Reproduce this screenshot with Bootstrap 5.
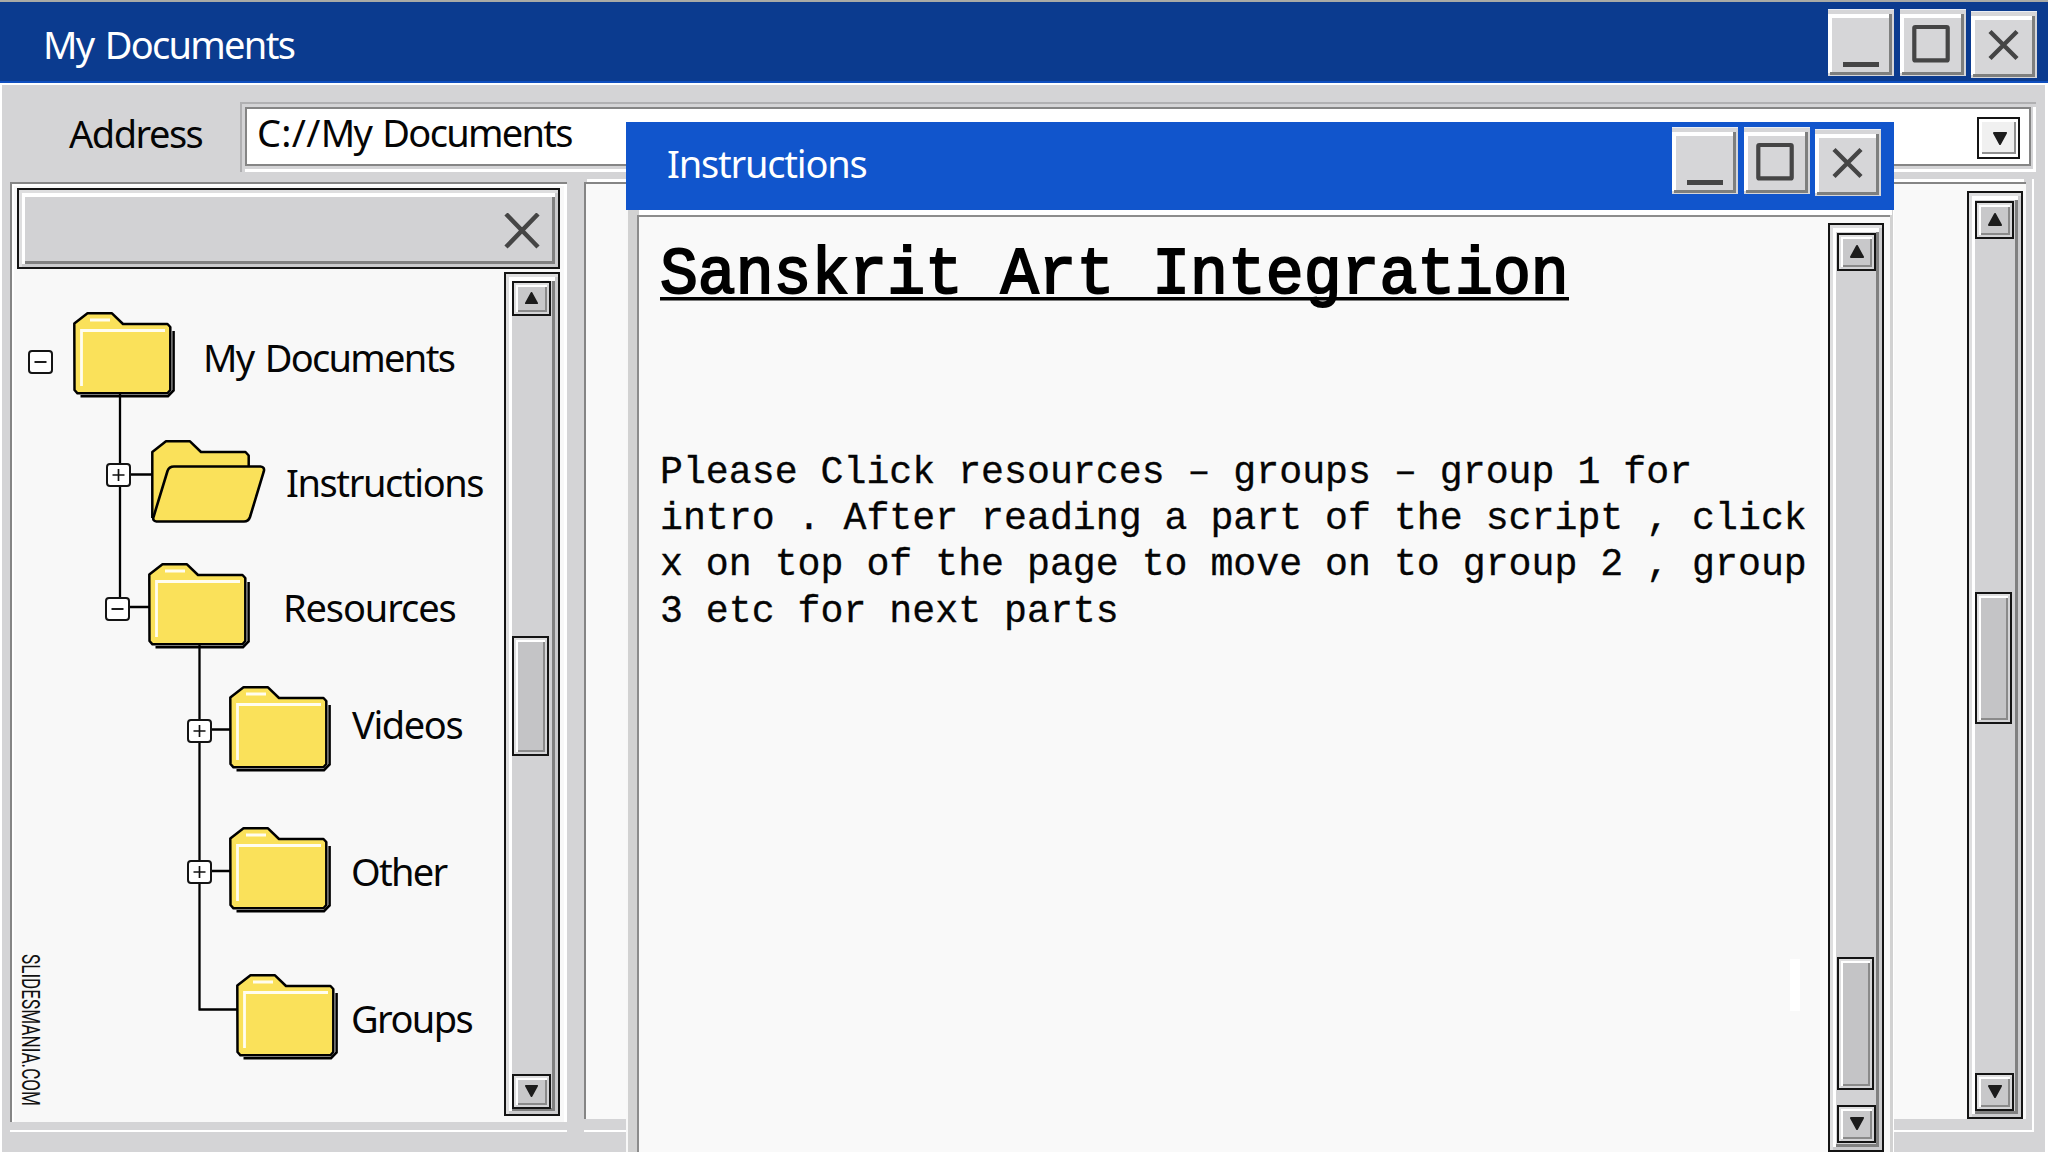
<!DOCTYPE html>
<html lang="en">
<head>
<meta charset="utf-8">
<meta name="viewport" content="width=device-width, initial-scale=1">
<title>My Documents</title>
<link href="https://cdn.jsdelivr.net/npm/bootstrap@5.3.0/dist/css/bootstrap.min.css" rel="stylesheet">
<style>
body{width:2048px;height:1152px;overflow:hidden;background:#d4d4d6;color:#050505;font-family:"Noto Sans",sans-serif;font-size:38px;line-height:50px;letter-spacing:-1.7px;word-spacing:3px}
svg{display:block;flex:none}
.desk{height:1152px;border-top:2px solid #a9aaa6}
.bar-main{height:81px;background:#0b3b8f;border-bottom:2px solid #0f4fbf;padding:7px 11px 0 43px;color:#fff}
.bar-main .cap{padding-top:10px}
.ctl{gap:5.500px}
.ctl .low{margin-top:2px}
.frame-main{border:solid #fff;border-width:2px 3px 0 2px;height:1069px}
/* address row */
.addr-label{width:238px;flex:none;padding:23px 0 0 67px;letter-spacing:-1.5px}
.addr-out{margin:17px 9px 0 0;height:70px;border:solid #b0b0b2;border-width:2px 0 0 2px;padding:3px 0 0 3px}
.addr-mid{height:65px;border:solid #fff;border-width:0 3px 3px 0;padding:0 2px 3px 0}
.addr-in{height:59px;background:#fff;border:2px solid #858585;padding:0 9px 0 10px}
.addr-in .path{margin-top:-2px}
.path .drive{letter-spacing:.3px}
/* panels */
.panes{margin-left:8px;margin-top:10px}
.pane-left{width:557px;height:940px;background:#f8f8f8;border:solid #858585;border-width:2px 0 0 2px;box-shadow:inset 2px 2px 0 #fff,inset -3px 0 0 #fff;padding:4px 7px 0 6px}
.pane-wrap{width:557px;border-bottom:2px solid #fff;height:950px}
.pane-right{width:1442px;height:937px;background:#f9f9f9;border:solid #858585;border-width:2px 0 0 2px;padding:7px 3px 0 0}
.right-wrap{width:1450px;margin-left:17px;margin-top:-3px;border-bottom:2px solid #fff;border-right:2px solid #fff;height:953px}
.right-wrap .topline{height:3px;background:#fff;margin-left:3px;margin-right:8px}
.bev{box-shadow:inset 3px 3px 0 #dededf,inset -3px -3px 0 #cbcbcd,inset 6px 7px 0 #fff,inset -6px -6px 0 #808080;border:2px solid #141414;background:#d2d2d4}
.pane-head{width:543px;height:81px;padding:23px 18px 0 0;margin-left:-1px}
.sbar{width:56px;padding:7px 6px 0 6px;flex:none}
.sbtn,.thumb,.drop{border:2px solid #141414;background:#c8c8ca;box-shadow:inset 2px 2px 0 #dededf,inset -2px -2px 0 #d4d4d6,inset 4px 4px 0 #fff,inset -4px -4px 0 #8a8a8a}
.sbtn{width:39px;height:38px;flex:none;padding:9px 0 0 10px}
.thumb{width:37px;flex:none;background:#c4c4c6}
.s-left{height:844px;margin-top:3px}
.s-left .sbtn{height:35px;padding-top:8px}
.s-left .thumb{height:120px;margin:320px 0 318px 0}
.s-main{height:928px;padding-top:8px}
.s-main .thumb{height:132px;margin:353px 0 349px}
.s-win{height:929px;padding-top:8px}
.s-win .thumb{height:133px;margin:686px 0 15px}
.s-win{padding-left:7px}
.drop{width:43px;height:42px;margin-top:8px;background:#f0f0f0;padding:12px 0 0 13px;box-shadow:inset 3px 3px 0 #fff,inset -2px -3px 0 #fff,inset -4px -5px 0 #909090}
/* folder tree */
.tree{position:relative;width:486px;height:852px}
.links{position:absolute;left:0;top:0}
.node{position:relative;height:86px}
.node span{display:block;white-space:nowrap}
.tog{background:#fff;border:2px solid #141414;border-radius:4px;width:25px;height:24px;flex:none;padding:3px 0 0 3px}
.n1{margin-top:43px;padding-left:10px}.n1 .tog{margin:38px 20px 0 0}.n1 span{margin:20px 0 0 28px}
.n2{margin-top:42px;padding-left:88px;letter-spacing:-1.4px}.n2 .tog{margin:23px 20px 0 0}.n2 span{margin:17px 0 0 20px}
.n3{margin-top:37px;padding-left:87px;letter-spacing:-1.1px}.n3 .tog{margin:34px 18px 0 0}.n3 span{margin:19px 0 0 33px}
.n4{margin-top:37px;padding-left:169px;letter-spacing:-1.4px}.n4 .tog{margin:33px 17px 0 0}.n4 span{margin:13px 0 0 21px}
.n5{margin-top:55px;padding-left:169px}.n5 .tog{margin:33px 17px 0 0}.n5 span{margin:19px 0 0 20px}
.n6{margin-top:61px;padding-left:218px;letter-spacing:-1.6px}.n6 span{margin:19px 0 0 13px}
.credit{position:absolute;left:0;bottom:8px}
/* instructions window */
.win{position:absolute;left:626px;top:122px;width:1268px;height:1030px;background:#f9f9f9}
.win-bar{height:88px;background:#1155cc;color:#fff;padding:5px 13px 0 41px}
.win-bar .cap{padding-top:11px;letter-spacing:-1.2px}
.win-body{height:942px;border-left:2px solid #f8f8f8;padding:5px 4px 0 9px;background:linear-gradient(#fff,#fff) 11px 0/1253px 5px no-repeat,linear-gradient(#fff,#fff) right/1px 100% no-repeat,#d2d2d2}
.sheet{width:1253px;height:937px;background:#f9f9f9;border:solid #8c8c8c;border-width:2px 0 0 2px;padding:6px 6px 0 21px}
.doc{font-family:"Liberation Mono",monospace;letter-spacing:0;word-spacing:0;flex:1;min-width:0}
.doc h1{font-size:63.1px;font-weight:400;line-height:72px;margin:17px 0 138px;white-space:nowrap;-webkit-text-stroke:2px #000;color:#000}
.doc h1 u{text-decoration:none;display:inline-block;background:linear-gradient(#000,#000) 0 57px/100% 3.5px no-repeat}
.doc h1 .tall{display:inline-block;transform:scaleY(1.07);transform-origin:0 53px}
.doc p{font-size:38.23px;line-height:46.2px;margin:0;white-space:nowrap;-webkit-text-stroke:.3px #050505}
.caret{width:10px;height:52px;background:#fff;margin:324px 0 0 1130px}
</style>
</head>
<body>
<svg width="0" height="0" class="position-absolute">
<defs>
<symbol id="face" viewBox="0 0 66 67"><rect width="66" height="67" fill="#d6d6d8"/><path fill="#e9edf4" d="M0 0h66v1H0z"/><path fill="#fff" d="M0 5h62v4H4v55H0z"/><path fill="#7e7f7e" d="M61 5h3v61H2v-3h59z"/></symbol>
<symbol id="min" viewBox="0 0 66 67"><use href="#face"/><path fill="#454545" d="M15 53h36v5H15z"/></symbol>
<symbol id="max" viewBox="0 0 66 67"><use href="#face"/><rect x="14.3" y="18" width="33.4" height="33.4" rx="1" fill="none" stroke="#454545" stroke-width="4.2"/></symbol>
<symbol id="cls" viewBox="0 0 66 67"><use href="#face"/><path d="M19 20.500l27 27m0-27l-27 27" stroke="#454545" stroke-width="4.4"/></symbol>
<symbol id="up" viewBox="0 0 16 15"><path d="M8 2l6 11H2z" fill="#1c1c1c" stroke="#1c1c1c" stroke-width="2" stroke-linejoin="round"/></symbol>
<symbol id="down" viewBox="0 0 16 15"><path d="M8 13l6-11H2z" fill="#1c1c1c" stroke="#1c1c1c" stroke-width="2" stroke-linejoin="round"/></symbol>
<symbol id="folder" viewBox="0 0 102 86"><path d="M7.500 84.200H95L100.600 78.500V19" fill="none" stroke="#000" stroke-width="2.500"/><path d="M1.300 11.500L14.500 1.300H39L50 12H94.500L97.300 15V78L94.500 81.300H4.500L1.500 78z" fill="#fae15a" stroke="#000" stroke-width="2.500" stroke-linejoin="round"/><path d="M17 8H37M8.500 74V18.500H92" fill="none" stroke="#fffdf0" stroke-width="2.800"/></symbol>
<symbol id="open" viewBox="0 0 115 86"><path d="M1.300 78V12L15 1.300H39L50 12H94.500L97.700 15.500V27" fill="#fae15a" stroke="#000" stroke-width="2.500" stroke-linejoin="round"/><path d="M2.500 77L16.500 31Q18 26.500 23 26.500H109.500Q114 27 112.800 31.500L99 77Q97.500 81.500 93 81.500H5.500Q1.300 81 2.500 77z" fill="#fae15a" stroke="#000" stroke-width="2.600"/></symbol>
<symbol id="plus" viewBox="0 0 15 14"><path d="M1.500 7h12M7.500 1v12" stroke="#111" stroke-width="1.700"/></symbol>
<symbol id="minus" viewBox="0 0 15 14"><path d="M1.500 7h12" stroke="#111" stroke-width="1.900"/></symbol>
</defs>
</svg>

<div class="desk">
  <header class="bar-main d-flex justify-content-between align-items-start">
    <div class="cap">My Documents</div>
    <div class="ctl d-flex">
      <svg width="66" height="67"><use href="#min"/></svg>
      <svg width="66" height="67"><use href="#max"/></svg>
      <svg class="low" width="66" height="67"><use href="#cls"/></svg>
    </div>
  </header>
  <div class="frame-main">
    <div class="d-flex">
      <div class="addr-label">Address</div>
      <div class="addr-out flex-grow-1"><div class="addr-mid"><div class="addr-in d-flex justify-content-between">
        <div class="path"><span class="drive">C://</span>My Documents</div>
        <div class="drop"><svg width="16" height="15"><use href="#down"/></svg></div>
      </div></div></div>
    </div>
    <div class="panes d-flex">
      <div class="pane-wrap">
        <aside class="pane-left">
          <div class="pane-head bev d-flex justify-content-end">
            <svg width="36" height="36" viewBox="0 0 36 36"><path d="M2 1l32 33M34 1L2 34" stroke="#454545" stroke-width="4.500"/></svg>
          </div>
          <div class="d-flex">
            <div class="tree">
              <svg class="links" width="486" height="852"><path d="M102 124V330M112 205.500H134M110 338H132M181.500 376V741M193 460.500H213M193 602H213M180.500 740.500H220" fill="none" stroke="#000" stroke-width="2.300"/></svg>
              <div class="node n1 d-flex align-items-start"><div class="tog"><svg width="15" height="14"><use href="#minus"/></svg></div><svg width="102" height="86"><use href="#folder"/></svg><span>My Documents</span></div>
              <div class="node n2 d-flex align-items-start"><div class="tog"><svg width="15" height="14"><use href="#plus"/></svg></div><svg width="115" height="86"><use href="#open"/></svg><span>Instructions</span></div>
              <div class="node n3 d-flex align-items-start"><div class="tog"><svg width="15" height="14"><use href="#minus"/></svg></div><svg width="102" height="86"><use href="#folder"/></svg><span>Resources</span></div>
              <div class="node n4 d-flex align-items-start"><div class="tog"><svg width="15" height="14"><use href="#plus"/></svg></div><svg width="102" height="86"><use href="#folder"/></svg><span>Videos</span></div>
              <div class="node n5 d-flex align-items-start"><div class="tog"><svg width="15" height="14"><use href="#plus"/></svg></div><svg width="102" height="86"><use href="#folder"/></svg><span>Other</span></div>
              <div class="node n6 d-flex align-items-start"><svg width="102" height="86"><use href="#folder"/></svg><span>Groups</span></div>
              <svg class="credit" width="34" height="170"><text transform="translate(3.500 11) rotate(90)" textLength="152" lengthAdjust="spacingAndGlyphs" font-family="Roboto, sans-serif" font-size="26.500" letter-spacing="0" fill="#111">SLIDESMANIA.COM</text></svg>
            </div>
            <div class="sbar bev s-left">
              <div class="sbtn"><svg width="15" height="14"><use href="#up"/></svg></div>
              <div class="thumb"></div>
              <div class="sbtn"><svg width="15" height="14"><use href="#down"/></svg></div>
            </div>
          </div>
        </aside>
      </div>
      <div class="right-wrap">
        <div class="topline"></div>
        <section class="pane-right d-flex justify-content-end">
          <div class="sbar bev s-main">
            <div class="sbtn"><svg width="16" height="15"><use href="#up"/></svg></div>
            <div class="thumb"></div>
            <div class="sbtn"><svg width="16" height="15"><use href="#down"/></svg></div>
          </div>
        </section>
      </div>
    </div>
  </div>
</div>

<div class="win">
  <div class="win-bar d-flex justify-content-between align-items-start">
    <div class="cap">Instructions</div>
    <div class="ctl d-flex">
      <svg width="66" height="67"><use href="#min"/></svg>
      <svg width="66" height="67"><use href="#max"/></svg>
      <svg class="low" width="66" height="67"><use href="#cls"/></svg>
    </div>
  </div>
  <div class="win-body">
    <div class="sheet d-flex">
      <article class="doc">
        <h1><u><span class="tall">Sanskrit Art Integration</span></u></h1>
        <p>Please Click resources – groups – group 1 for<br>intro . After reading a part of the script , click<br>x on top of the page to move on to group 2 , group<br>3 etc for next parts</p>
        <div class="caret"></div>
      </article>
      <div class="sbar bev s-win">
        <div class="sbtn"><svg width="16" height="15"><use href="#up"/></svg></div>
        <div class="thumb"></div>
        <div class="sbtn"><svg width="16" height="15"><use href="#down"/></svg></div>
      </div>
    </div>
  </div>
</div>
<script src="https://cdn.jsdelivr.net/npm/bootstrap@5.3.0/dist/js/bootstrap.bundle.min.js"></script>
</body>
</html>
